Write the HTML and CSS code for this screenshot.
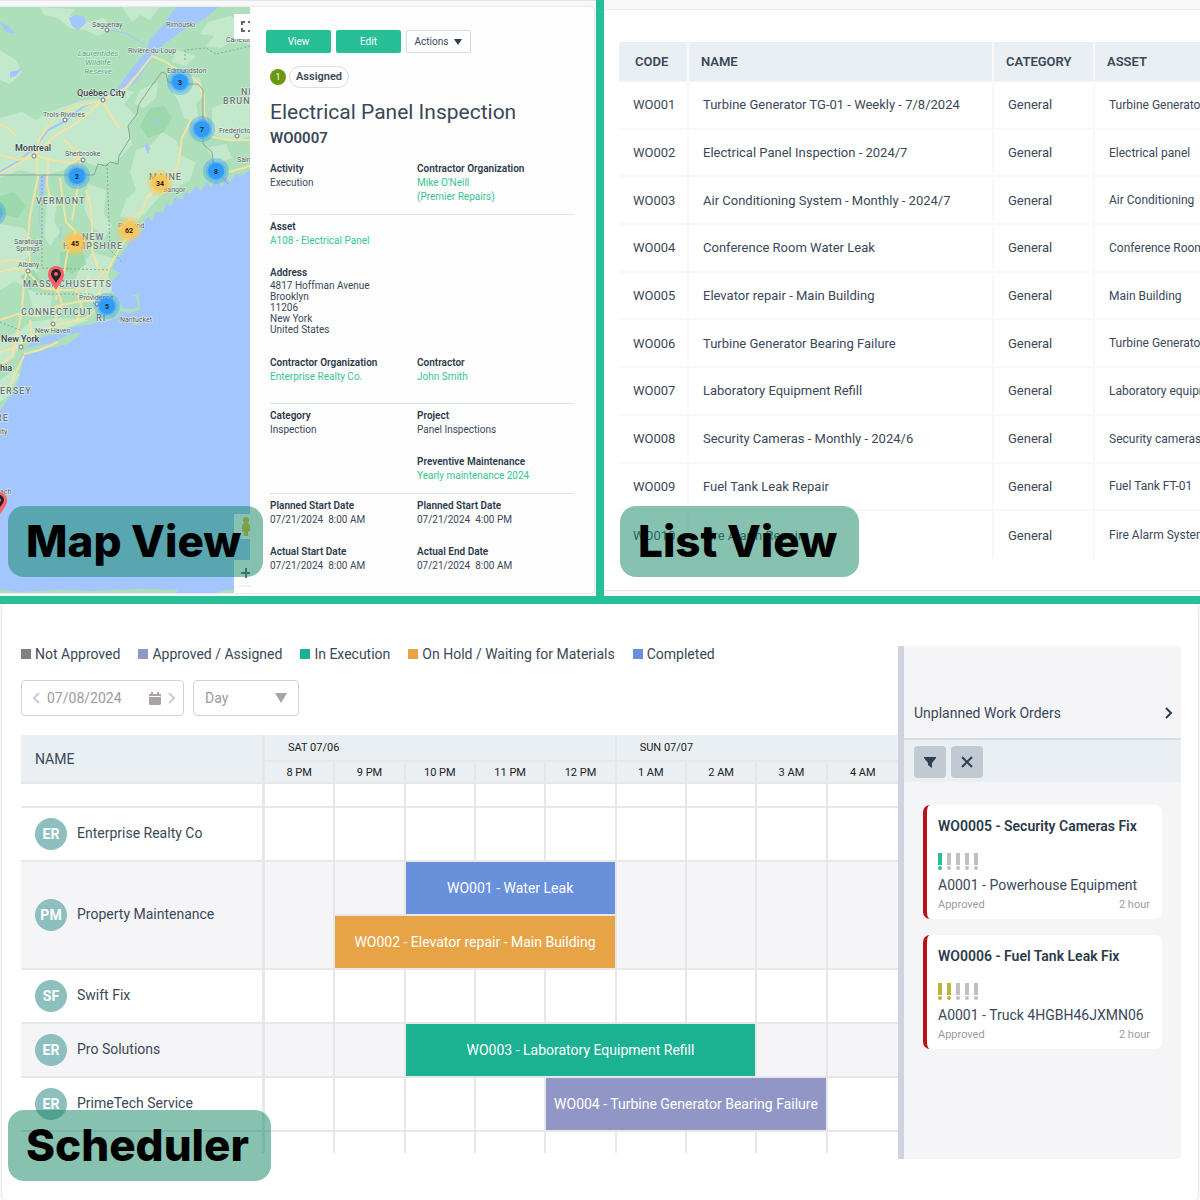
FILE: index.html
```
<!DOCTYPE html>
<html lang="en">
<head>
    <meta charset="UTF-8">
    <meta name="viewport" content="width=device-width, initial-scale=1.0">
    <title>Work Orders</title>
    <link rel="stylesheet" href="styles.css">
</head>
<body>
    <div class="views">
        <section class="panel map-view">
            <div class="map-card">
                <svg class="map" viewBox="0 7 250 586" preserveAspectRatio="xMinYMin slice" role="img" aria-label="Map of work orders">
                    <rect y="7" width="250" height="586" fill="#a3c6ff"/>
                    <!-- land -->
                    <path fill="#aedfbb" d="M0 7H250V170L243 175L236 174L230 182L226 177L222 187L216 179L211 188L207 182L201 191L196 186L190 194L184 192L183 199L174 198L172 206L166 203L163 213L156 211L152 222L148 216L143 224L141 232L132 238L126 248L118 258L112 268L120 273L113 280L108 288L116 296L120 304L124 309L134 309L138 306L136 297L132 295L138 295L140 304L140 310L130 313L121 311L118 317L108 321L100 321L88 325L72 327L62 333L46 336L32 342L26 348L52 343L68 335L82 332L76 338L68 344L56 347L44 348L36 351L27 352L23 356L20 359L22 366L20 376L15 389L8 399L2 408L0 410Z"/>
                    <path fill="#aedfbb" d="M116 323L122 318L126 321ZM132 325L138 321L141 325ZM0 593V590L20 592L60 590L90 591L140 589L178 590L176 593ZM216 593L226 590L250 589V593Z"/>
                    <g fill="#c3e8cb">
                        <path d="M40 7L75 9L70 16L88 22L104 18L112 30L98 36L85 30L70 28L58 18L44 15ZM122 7L160 7L150 20L140 15L132 22ZM208 22L230 16L250 24V44L232 40L222 48L206 46L214 36L200 34Z"/>
                        <path d="M0 118L22 112L36 120L48 112L66 106L84 100L104 98L122 88L134 92L124 104L136 116L128 128L132 145L118 160L96 166L80 160L64 170L44 176L20 170L0 178Z"/>
                        <path d="M180 74L200 78L204 96L196 104L200 124L184 118L178 100L170 88ZM212 108L232 100L250 104V136L232 142L212 134ZM206 148L226 144L232 158L216 164ZM140 90L158 82L156 98L144 108L134 104Z"/>
                        <path d="M136 150L152 144L162 132L176 140L182 156L196 162L190 180L176 188L160 196L148 210L136 222L120 216L126 200L136 190L130 172ZM88 184L106 190L104 214L112 226L104 238L92 226L84 208Z"/>
                        <path d="M48 192L58 200L54 222L60 232L50 246L44 236L46 214ZM0 224L24 228L34 244L26 260L38 270L30 288L14 282L0 290ZM92 252L112 258L108 274L112 290L104 306L84 300L72 286L80 268Z"/>
                        <path d="M0 340L20 330L30 322L60 318L90 320L66 328L40 334L20 344L14 358L0 366ZM0 380L14 370L20 374L8 396L0 402ZM28 290L52 296L50 310L34 312ZM0 50L16 60L22 72L10 84L0 80ZM176 50L196 56L186 66L172 62Z"/>
                    </g>
                    <g fill="#9bd8ab">
                        <path d="M150 108L164 106L172 118L164 132L148 138L140 126ZM60 252L82 250L86 264L72 274L60 268ZM0 196L14 192L26 206L18 218L0 214ZM20 276L34 270L42 282L30 290Z"/>
                    </g>
                    <!-- rivers and lakes -->
                    <path fill="#a3c6ff" d="M176 7L164 24L150 40L144 54L132 68L118 88L124 90L136 82L148 64L160 48L180 32L206 18L218 7Z"/>
                    <path fill="#a3c6ff" d="M69 18L76 15L84 17L86 23L78 30L72 26ZM40 176L46 174L44 192L41 200L39 188ZM146 142L150 148L148 154L145 148ZM156 116L158 124L155 126ZM0 22L8 26L16 34L6 32ZM10 72L18 70L24 66L16 76L10 78ZM178 84L181 87L179 90Z"/>
                    <g fill="none" stroke="#a3c6ff" stroke-width="2">
                        <path d="M120 88L104 98L84 106L64 122L48 130L36 146L20 160L0 172"/>
                        <path stroke-width="1" d="M108 30L126 33L144 44M40 200L39 220L42 232M61 226L60 240"/>
                    </g>
                    <!-- roads -->
                    <g fill="none" stroke="#f4e2a2" stroke-width="2" stroke-linejoin="round">
                        <path d="M0 155L18 160L34 155L58 134L78 122L104 99L126 88L138 74L152 56L166 62L180 72L198 82L204 96L204 112L208 124"/>
                        <path d="M34 155L52 160L78 164M34 155L40 138L56 116L72 108L102 100L110 114L120 129M0 174L34 155M36 157L38 178L34 196L30 216L28 240L30 262L24 282L22 310L16 340L12 356L0 366M0 125L8 128L16 136M64 140L78 152L72 164L84 154"/>
                        <path d="M48 160L47 184L50 198M60 178L64 208L66 222L76 232L68 250L64 272L58 288L56 300M80 162L78 186L72 220M86 190L90 204L92 222L92 250L98 268L108 272"/>
                        <path d="M192 118L182 138L178 164L172 180L160 184L147 198L142 212L126 222L128 236L120 248L112 262L104 282L96 300L100 308L112 306M210 136L226 140L250 140M228 172L236 170L250 166"/>
                        <path d="M28 272L42 288L58 290L76 290L94 282L106 270M0 272L14 268L28 272M0 262L12 260L26 262M0 320L18 314L38 316L58 306L76 302L96 300M20 344L34 336L52 326L70 322L86 318L100 306M24 354L40 350L58 342M24 356L16 372L8 390M0 352L22 346M58 290L62 304L54 322M76 290L82 308L76 322M88 276L86 296M30 320L32 336"/>
                    </g>
                    <!-- state lines -->
                    <g fill="none" stroke="#87a894">
                        <path d="M0 175H94L98 164L106 166L110 162L118 164L119 156L130 138L128 126L137 114L139 104L150 88L162 72L166 74L168 82L186 84L198 84L203 90V144L212 152L214 168L228 184"/>
                        <path stroke-dasharray="2 2" d="M107 164L110 250L122 262M42 176L42 268L110 270M36 294H92L94 306M185 60V50L206 48L216 54L234 50L250 46M0 322L20 330"/>
                    </g>
                    <!-- place names -->
                    <g class="place">
                        <text x="92" y="27">Saguenay</text>
                        <text x="166" y="27">Rimouski</text>
                        <text x="128" y="53">Rivière-du-Loup</text>
                        <text x="226" y="42">Carleton</text>
                        <text x="167" y="73">Edmundston</text>
                        <text x="43" y="117">Trois-Rivières</text>
                        <text x="65" y="156">Sherbrooke</text>
                        <text x="219" y="133">Fredericton</text>
                        <text x="237" y="162">Saint John</text>
                        <text x="163" y="192">Bangor</text>
                        <text x="118" y="228">Portland</text>
                        <text x="14" y="244">Saratoga</text>
                        <text x="16" y="251">Springs</text>
                        <text x="18" y="267">Albany</text>
                        <text x="79" y="300">Providence</text>
                        <text x="120" y="322">Nantucket</text>
                        <text x="35" y="333">New Haven</text>
                        <text x="0" y="434">ity</text>
                        <text x="0" y="494">ach</text>
                    </g>
                    <g class="city">
                        <text x="77" y="96">Québec City</text>
                        <text x="15" y="151">Montreal</text>
                        <text x="1" y="342">New York</text>
                        <text x="0" y="371">hia</text>
                    </g>
                    <g class="state">
                        <text x="36" y="204">VERMONT</text>
                        <text x="149" y="180">MAINE</text>
                        <text x="241" y="95">NEW</text>
                        <text x="223" y="104">BRUNSWICK</text>
                        <text x="82" y="240">NEW</text>
                        <text x="63" y="249">HAMPSHIRE</text>
                        <text x="23" y="287">MASSACHUSETTS</text>
                        <text x="21" y="315">CONNECTICUT</text>
                        <text x="96" y="321">RI</text>
                        <text x="0" y="394">ERSEY</text>
                        <text x="-4" y="421">RE</text>
                    </g>
                    <g class="park">
                        <text x="98" y="56">Laurentides</text>
                        <text x="98" y="65">Wildlife</text>
                        <text x="98" y="74">Reserve</text>
                    </g>
                    <g fill="#fff" stroke="#6b6f73">
                        <circle cx="107" cy="30" r="2"/>
                        <circle cx="103" cy="100" r="2"/>
                        <circle cx="65" cy="120" r="2"/>
                        <circle cx="34" cy="156" r="2"/>
                        <circle cx="83" cy="160" r="2"/>
                        <circle cx="237" cy="136" r="2"/>
                        <circle cx="28" cy="271" r="2"/>
                        <circle cx="53" cy="324" r="2"/>
                        <circle cx="97" cy="304" r="2"/>
                        <circle cx="21" cy="347" r="2"/>
                    </g>
                    <!-- clusters -->
                    <g class="cluster blue">
                        <circle class="halo" cx="180" cy="82" r="13"/><circle class="halo" cx="180" cy="82" r="10"/><circle cx="180" cy="82" r="8"/><text x="180" y="85">3</text>
                        <circle class="halo" cx="202" cy="129" r="13"/><circle class="halo" cx="202" cy="129" r="10"/><circle cx="202" cy="129" r="8"/><text x="202" y="132">7</text>
                        <circle class="halo" cx="216" cy="171" r="13"/><circle class="halo" cx="216" cy="171" r="10"/><circle cx="216" cy="171" r="8"/><text x="216" y="174">8</text>
                        <circle class="halo" cx="77" cy="176" r="13"/><circle class="halo" cx="77" cy="176" r="10"/><circle cx="77" cy="176" r="8"/><text x="77" y="179">2</text>
                        <circle class="halo" cx="107" cy="306" r="13"/><circle class="halo" cx="107" cy="306" r="10"/><circle cx="107" cy="306" r="8"/><text x="107" y="309">5</text>
                        <circle class="halo" cx="-7" cy="213" r="13"/><circle class="halo" cx="-7" cy="213" r="10"/>
                    </g>
                    <g class="cluster yellow">
                        <circle class="halo" cx="160" cy="183" r="13"/><circle class="halo" cx="160" cy="183" r="10"/><circle cx="160" cy="183" r="8"/><text x="160" y="186">34</text>
                        <circle class="halo" cx="129" cy="230" r="13"/><circle class="halo" cx="129" cy="230" r="10"/><circle cx="129" cy="230" r="8"/><text x="129" y="233">62</text>
                        <circle class="halo" cx="75" cy="243" r="13"/><circle class="halo" cx="75" cy="243" r="10"/><circle cx="75" cy="243" r="8"/><text x="75" y="246">45</text>
                    </g>
                    <!-- pins -->
                    <g id="pin">
                        <path fill="#ff6067" d="M56 290C53 284 48 281 48 274A8 8 0 0 1 64 274C64 281 59 284 56 290Z"/>
                        <path fill="#20242a" d="M56 283C54 279 51 277 51 274A5 5 0 0 1 61 274C61 277 58 279 56 283Z"/>
                        <circle cx="56" cy="274" r="2" fill="#ff6067"/>
                    </g>
                    <use href="#pin" x="-57" y="226"/>
                    <!-- map controls -->
                    <path fill="#fff" d="M234 14H250V39H234ZM234 514H250V539H234ZM234 560H250V593H234Z"/>
                    <path fill="none" stroke="#666" stroke-width="2" d="M245 22H242V25M242 28V31H245M248 22H250M248 31H250M241 573H251M246 568V578"/>
                    <path stroke="#e6e6e6" d="M238 586H250"/>
                    <g fill="#f5b52e">
                        <circle cx="246" cy="520" r="3"/>
                        <path d="M242 525L244 523H248L250 525V531L248 532V536H244V532L242 531Z"/>
                    </g>
                </svg>
                <div class="details">
                    <div class="buttons">
                        <button type="button" class="primary">View</button>
                        <button type="button" class="primary">Edit</button>
                        <button type="button" class="actions">Actions
                            <svg width="8" height="6" viewBox="0 0 8 6"><path d="M0 0H8L4 6Z" fill="#2c3e50"/></svg>
                        </button>
                    </div>
                    <div class="status"><span class="count">1</span><span class="state-pill">Assigned</span></div>
                    <h1>Electrical Panel Inspection</h1>
                    <h2>WO0007</h2>
                    <dl>
                        <div><dt>Activity</dt><dd>Execution</dd></div>
                        <div><dt>Contractor Organization</dt><dd><a href="#">Mike O'Neill<br>(Premier Repairs)</a></dd></div>
                    </dl>
                    <dl class="asset">
                        <div class="wide"><dt>Asset</dt><dd><a href="#">A108 - Electrical Panel</a></dd></div>
                        <div class="wide"><dt>Address</dt><dd class="address">4817 Hoffman Avenue<br>Brooklyn<br>11206<br>New York<br>United States</dd></div>
                        <div><dt>Contractor Organization</dt><dd><a href="#">Enterprise Realty Co.</a></dd></div>
                        <div><dt>Contractor</dt><dd><a href="#">John Smith</a></dd></div>
                    </dl>
                    <dl>
                        <div><dt>Category</dt><dd>Inspection</dd></div>
                        <div><dt>Project</dt><dd>Panel Inspections</dd></div>
                        <div class="second"><dt>Preventive Maintenance</dt><dd><a href="#">Yearly maintenance 2024</a></dd></div>
                    </dl>
                    <dl>
                        <div><dt>Planned Start Date</dt><dd>07/21/2024&nbsp; 8:00 AM</dd></div>
                        <div><dt>Planned Start Date</dt><dd>07/21/2024&nbsp; 4:00 PM</dd></div>
                        <div><dt>Actual Start Date</dt><dd>07/21/2024&nbsp; 8:00 AM</dd></div>
                        <div><dt>Actual End Date</dt><dd>07/21/2024&nbsp; 8:00 AM</dd></div>
                    </dl>
                </div>
            </div>
            <div class="caption">Map View</div>
        </section>

        <section class="panel list-view">
            <div class="list-card">
                <table class="orders">
                    <thead>
                        <tr><th class="code">Code</th><th class="name">Name</th><th class="category">Category</th><th>Asset</th></tr>
                    </thead>
                    <tbody>
                        <tr><td>WO001</td><td>Turbine Generator TG-01 - Weekly - 7/8/2024</td><td>General</td><td>Turbine Generator</td></tr>
                        <tr><td>WO002</td><td>Electrical Panel Inspection - 2024/7</td><td>General</td><td>Electrical panel</td></tr>
                        <tr><td>WO003</td><td>Air Conditioning System - Monthly - 2024/7</td><td>General</td><td>Air Conditioning</td></tr>
                        <tr><td>WO004</td><td>Conference Room Water Leak</td><td>General</td><td>Conference Room</td></tr>
                        <tr><td>WO005</td><td>Elevator repair - Main Building</td><td>General</td><td>Main Building</td></tr>
                        <tr><td>WO006</td><td>Turbine Generator Bearing Failure</td><td>General</td><td>Turbine Generator</td></tr>
                        <tr><td>WO007</td><td>Laboratory Equipment Refill</td><td>General</td><td>Laboratory equipment</td></tr>
                        <tr><td>WO008</td><td>Security Cameras - Monthly - 2024/6</td><td>General</td><td>Security cameras</td></tr>
                        <tr><td>WO009</td><td>Fuel Tank Leak Repair</td><td>General</td><td>Fuel Tank FT-01</td></tr>
                        <tr><td>WO010</td><td>Fire Alarm Repair</td><td>General</td><td>Fire Alarm System</td></tr>
                    </tbody>
                </table>
            </div>
            <div class="caption">List View</div>
        </section>

        <section class="panel scheduler">
            <div class="scheduler-card">
                <div class="planner">
                    <ul class="legend">
                        <li class="gray">Not Approved</li>
                        <li class="purple">Approved / Assigned</li>
                        <li class="green">In Execution</li>
                        <li class="orange">On Hold / Waiting for Materials</li>
                        <li class="blue">Completed</li>
                    </ul>
                    <div class="controls">
                        <div class="date-box">
                            <button type="button" aria-label="Previous day"><svg width="8" height="12" viewBox="0 0 8 12"><path d="M7 1L2 6L7 11" fill="none" stroke="#c9cfcd" stroke-width="2"/></svg></button>
                            <input type="text" value="07/08/2024" aria-label="Date">
                            <svg width="12" height="13" viewBox="0 0 12 13"><path fill="#aaa3a3" d="M0 2H2V0H4V2H8V0H10V2H12V4H0ZM0 5H12V12L11 13H1L0 12Z"/></svg>
                            <button type="button" aria-label="Next day"><svg width="8" height="12" viewBox="0 0 8 12"><path d="M1 1L6 6L1 11" fill="none" stroke="#c9cfcd" stroke-width="2"/></svg></button>
                        </div>
                        <div class="select-box">
                            <select aria-label="Range">
                                <option>Day</option>
                                <option>Week</option>
                                <option>Month</option>
                            </select>
                            <svg width="12" height="10" viewBox="0 0 12 10"><path fill="#aaa3a3" d="M0 0H12L6 10Z"/></svg>
                        </div>
                    </div>
                    <table class="schedule">
                        <thead>
                            <tr class="days"><th class="who" rowspan="2">NAME</th><th colspan="5">SAT 07/06</th><th colspan="4">SUN 07/07</th></tr>
                            <tr class="hours"><th>8 PM</th><th>9 PM</th><th>10 PM</th><th>11 PM</th><th>12 PM</th><th>1 AM</th><th>2 AM</th><th>3 AM</th><th>4 AM</th></tr>
                        </thead>
                        <tbody>
                            <tr class="short"><td class="who"></td><td></td><td></td><td></td><td></td><td></td><td></td><td></td><td></td><td></td></tr>
                            <tr><td class="who"><span class="avatar">ER</span>Enterprise Realty Co</td><td></td><td></td><td></td><td></td><td></td><td></td><td></td><td></td><td></td></tr>
                            <tr class="shade"><td class="who" rowspan="2"><span class="avatar">PM</span>Property Maintenance</td><td rowspan="2"></td><td></td><td class="event blue" colspan="3">WO001 - Water Leak</td><td rowspan="2"></td><td rowspan="2"></td><td rowspan="2"></td><td rowspan="2"></td></tr>
                            <tr class="shade"><td class="event orange" colspan="4">WO002 - Elevator repair - Main Building</td></tr>
                            <tr><td class="who"><span class="avatar">SF</span>Swift Fix</td><td></td><td></td><td></td><td></td><td></td><td></td><td></td><td></td><td></td></tr>
                            <tr class="shade"><td class="who"><span class="avatar">ER</span>Pro Solutions</td><td></td><td></td><td class="event green" colspan="5">WO003 - Laboratory Equipment Refill</td><td></td><td></td></tr>
                            <tr><td class="who"><span class="avatar">ER</span>PrimeTech Service</td><td></td><td></td><td></td><td></td><td class="event purple" colspan="4">WO004 - Turbine Generator Bearing Failure</td><td></td></tr>
                            <tr class="short last"><td class="who"></td><td></td><td></td><td></td><td></td><td></td><td></td><td></td><td></td><td></td></tr>
                        </tbody>
                    </table>
                </div>
                <aside class="unplanned">
                    <header>
                        <h3>Unplanned Work Orders</h3>
                        <button type="button" aria-label="Collapse"><svg width="8" height="12" viewBox="0 0 8 12"><path d="M1 1L6 6L1 11" fill="none" stroke="#2c3e50" stroke-width="2"/></svg></button>
                    </header>
                    <div class="tools">
                        <button type="button" aria-label="Filter"><svg width="12" height="11" viewBox="0 0 12 11"><path fill="#2c3e50" d="M0 0H12V1L8 6V11L4 8V6L0 1Z"/></svg></button>
                        <button type="button" aria-label="Clear"><svg width="12" height="12" viewBox="0 0 12 12"><path d="M1 1L11 11M11 1L1 11" stroke="#2c3e50" stroke-width="2"/></svg></button>
                    </div>
                    <div class="cards">
                        <article>
                            <h4>WO0005 - Security Cameras Fix</h4>
                            <div class="priority low"><i class="on"></i><i></i><i></i><i></i><i></i></div>
                            <p>A0001 - Powerhouse Equipment</p>
                            <footer><span>Approved</span><span>2 hour</span></footer>
                        </article>
                        <article>
                            <h4>WO0006 - Fuel Tank Leak Fix</h4>
                            <div class="priority medium"><i class="on"></i><i class="on"></i><i></i><i></i><i></i></div>
                            <p>A0001 - Truck 4HGBH46JXMN06</p>
                            <footer><span>Approved</span><span>2 hour</span></footer>
                        </article>
                    </div>
                </aside>
            </div>
            <div class="caption">Scheduler</div>
        </section>
    </div>
</body>
</html>
```
FILE: styles.css
```
* {
    box-sizing: border-box;
}
body {
    margin: 0;
    font-family: Roboto, "Liberation Sans", sans-serif;
    font-size: 14px;
    color: #3a4858;
    background: #27bf95;
}
h1, h2, h3, h4, p, ul, dl, dd {
    margin: 0;
    padding: 0;
}
button {
    font-family: inherit;
    cursor: pointer;
    padding: 0;
    border: none;
    background: none;
}
svg {
    display: block;
}
a {
    color: #37c692;
    text-decoration: none;
}
.views {
    display: grid;
    grid-template-columns: minmax(0, 1fr) minmax(0, 1fr);
    gap: 8px;
}
.panel {
    position: relative;
    background: #f8f8fb;
}
.caption {
    position: absolute;
    left: 8px;
    bottom: 19px;
    padding: 0 22px 0 18px;
    border-radius: 16px;
    background: rgba(15, 134, 98, 0.5);
    color: #000;
    font-family: Inter, sans-serif;
    font-size: 44px;
    font-weight: 800;
    line-height: 71px;
}
.list-view .caption {
    left: 16px;
}

/* Map view */
.map-view {
    padding: 6px 2px 3px 0;
    border-top: 1px solid #e6e6ea;
}
.map-card {
    display: flex;
    height: 100%;
    background: #fdfdfd;
    border-radius: 0 4px 4px 0;
    box-shadow: 0 0 2px rgba(0, 0, 0, 0.2);
}
.map {
    flex: none;
    width: 250px;
    height: 586px;
}
.map text {
    paint-order: stroke;
    stroke: #e6f5ea;
    stroke-width: 1px;
}
.place {
    font-size: 7px;
    fill: #53595e;
}
.city {
    font-size: 9px;
    font-weight: 500;
    fill: #3b4045;
}
.state {
    font-size: 9px;
    font-weight: 500;
    letter-spacing: 1px;
    fill: #6b7378;
}
.park {
    font-size: 8px;
    font-style: italic;
    text-anchor: middle;
    fill: #4da276;
}
.map .cluster text {
    font-size: 7px;
    font-weight: 700;
    text-anchor: middle;
    fill: #222;
    stroke: none;
}
.cluster.blue {
    fill: #2f9bfb;
}
.cluster.yellow {
    fill: #fdc557;
}
.halo {
    opacity: 0.35;
}
.details {
    flex: 1;
    padding: 23px 20px 15px;
    font-size: 10px;
    line-height: 14px;
}
.buttons {
    display: flex;
    gap: 5px;
    margin-left: -4px;
}
.buttons button {
    width: 65px;
    height: 23px;
    border-radius: 2px;
    font-size: 10px;
}
.primary {
    background: #27bf95;
    color: #fff;
}
.actions {
    display: flex;
    align-items: center;
    justify-content: center;
    gap: 6px;
    background: #fff;
    color: #3a4858;
}
.buttons .actions {
    border: 1px solid #d3dae2;
}
.status {
    display: flex;
    align-items: center;
    gap: 3px;
    margin-top: 13px;
}
.count {
    width: 16px;
    border-radius: 8px;
    background: #6a980f;
    color: #fff;
    font-size: 9px;
    line-height: 16px;
    text-align: center;
}
.state-pill {
    padding: 0 6px;
    border: 1px solid #d9dfe6;
    border-radius: 11px;
    font-size: 11px;
    font-weight: 600;
    line-height: 20px;
}
.details h1 {
    margin-top: 11px;
    font-size: 21px;
    font-weight: 400;
    line-height: 26px;
}
.details h2 {
    margin: 4px 0 15px;
    font-size: 15px;
    font-weight: 600;
    line-height: 18px;
}
dl {
    display: grid;
    grid-template-columns: 147px 1fr;
    row-gap: 18px;
    padding-bottom: 10px;
}
dl + dl {
    padding-top: 5px;
    border-top: 1px solid #dde3ea;
}
dl.asset {
    padding-bottom: 19px;
}
dl:last-child {
    padding-bottom: 0;
}
dt {
    font-weight: 600;
    color: #2c3a4a;
}
.wide {
    grid-column: 1 / -1;
}
.second {
    grid-column: 2;
}
.address {
    padding-bottom: 3px;
    line-height: 11px;
}

/* List view */
.list-view {
    padding: 9px 0 5px;
}
.list-card {
    height: 100%;
    padding: 32px 0 0 15px;
    overflow: hidden;
    background: #fff;
    border-top: 1px solid #ececef;
    border-bottom: 1px solid #e4e4e8;
}
.orders {
    table-layout: fixed;
    width: 640px;
    height: 517px;
    border-collapse: separate;
    border-spacing: 0;
    white-space: nowrap;
}
.orders th {
    height: 40px;
    padding: 0 12px;
    background: #e9eff3;
    border-right: 2px solid #f8f8fb;
    border-bottom: 1px solid #f5f5f8;
    font-weight: 600;
    font-size: 13px;
    text-align: left;
    text-transform: uppercase;
}
.orders th:first-child {
    padding-left: 16px;
    border-radius: 3px 0 0 0;
}
.orders td {
    height: 47px;
    padding: 0 14px;
    border-right: 2px solid #f8f8fb;
    border-bottom: 2px solid #f8f8fb;
    font-size: 13px;
}
.orders td:nth-child(4) {
    font-size: 12px;
}
.orders tr:last-child td {
    border-bottom: none;
}
.orders .code {
    width: 70px;
}
.orders .name {
    width: 305px;
}
.orders .category {
    width: 101px;
}

/* Scheduler */
.scheduler {
    grid-column: 1 / -1;
    padding: 0 1px;
}
.scheduler-card {
    display: flex;
    padding: 42px 17px 41px 19px;
    background: #fff;
    border: solid #e9e9ec;
    border-width: 0 1px;
    border-radius: 6px;
}
.planner {
    flex: 1;
    min-width: 0;
    padding-bottom: 6px;
}
.legend {
    display: flex;
    gap: 18px;
    list-style: none;
    line-height: 16px;
}
.legend li {
    display: flex;
    align-items: center;
    gap: 4px;
    background: none;
}
.legend li::before {
    content: "";
    width: 10px;
    height: 10px;
    background: #808080;
}
.event.purple, .legend .purple::before {
    background: #9097c6;
}
.event.green, .legend .green::before {
    background: #1bb193;
}
.event.orange, .legend .orange::before {
    background: #e6a447;
}
.event.blue, .legend .blue::before {
    background: #6990db;
}
.controls {
    display: flex;
    gap: 9px;
    margin: 18px 0 19px;
}
.date-box, .select-box {
    display: flex;
    align-items: center;
    height: 36px;
    border: 1px solid #cbd4de;
    border-radius: 4px;
}
.date-box {
    width: 163px;
    gap: 7px;
    padding: 0 7px 0 10px;
}
.date-box input {
    flex: 1;
    min-width: 0;
    padding: 0;
    border: none;
    background: none;
    font: inherit;
    color: #9b9b9b;
}
.select-box {
    position: relative;
    width: 106px;
}
.select-box select {
    width: 100%;
    height: 100%;
    padding: 0 11px;
    border: none;
    background: none;
    appearance: none;
    font: inherit;
    color: #9b9b9b;
}
.select-box svg {
    position: absolute;
    right: 11px;
    pointer-events: none;
}
.schedule {
    table-layout: fixed;
    width: 100%;
    border-collapse: separate;
    border-spacing: 0;
}
.schedule th, .schedule td {
    height: 54px;
    padding: 0;
    border: solid #e7e7e7;
    border-width: 0 2px 2px 0;
    background-clip: padding-box;
}
.schedule th {
    background: #e9eff3;
    color: #222;
    font-size: 11px;
    font-weight: 400;
}
.schedule tr > :last-child {
    border-right: none;
}
.schedule .event:last-child {
    border-right: 2px solid #e7e7e7;
}
.schedule .days th {
    height: 27px;
    padding-left: 23px;
    text-align: left;
}
.schedule .hours th {
    height: 22px;
}
.schedule .short td {
    height: 24px;
}
.schedule .last td {
    height: 21px;
    border-bottom: none;
}
.schedule .who {
    width: 244px;
    padding-left: 14px;
    border-right-width: 3px;
}
.schedule .days .who {
    padding-left: 14px;
    color: #3a4858;
    font-size: 14px;
}
.schedule .shade td:not(.event) {
    background: #f5f5f8;
}
.event {
    color: #fff;
    text-align: center;
    white-space: nowrap;
}
.avatar {
    display: inline-block;
    width: 32px;
    margin-right: 10px;
    border-radius: 16px;
    background: #8cbfbd;
    color: #fff;
    font-weight: 700;
    line-height: 32px;
    text-align: center;
    vertical-align: middle;
}
.unplanned {
    width: 283px;
    border-left: 6px solid #d0d3df;
    border-radius: 0 3px 3px 0;
    background: #f5f5f8;
}
.unplanned header {
    display: flex;
    align-items: flex-end;
    justify-content: space-between;
    height: 94px;
    padding: 0 8px 17px 10px;
    border-bottom: 2px solid #d3dde5;
}
.unplanned header button {
    padding: 2px 0;
}
.unplanned h3 {
    font-size: 14px;
    font-weight: 400;
    line-height: 16px;
}
.tools {
    display: flex;
    gap: 5px;
    padding: 6px 10px 4px;
    background: #e9eff3;
}
.tools button {
    display: grid;
    place-items: center;
    width: 32px;
    height: 32px;
    border-radius: 4px;
    background: #c1c9d2;
}
.cards {
    display: grid;
    gap: 16px;
    padding: 23px 19px 0;
}
article {
    height: 114px;
    padding: 13px 12px 0 11px;
    border-left: 4px solid #bb1217;
    border-radius: 7px;
    background: #fff;
}
article h4 {
    font-size: 14px;
    font-weight: 600;
    line-height: 16px;
    color: #2c3a4a;
}
.priority {
    display: flex;
    gap: 5px;
    margin: 19px 0 6px;
}
.priority i {
    width: 4px;
    color: #bfbfc4;
}
.priority i::before, .priority i::after {
    content: "";
    display: block;
    height: 12px;
    background: currentColor;
}
.priority i::after {
    height: 4px;
    margin-top: 1px;
    border-radius: 2px;
}
.low .on {
    color: #27bf95;
}
.medium .on {
    color: #b9b53a;
}
article p {
    line-height: 18px;
}
article footer {
    display: flex;
    justify-content: space-between;
    margin-top: 5px;
    color: #9b9b9b;
    font-size: 11px;
    line-height: 12px;
}
```
